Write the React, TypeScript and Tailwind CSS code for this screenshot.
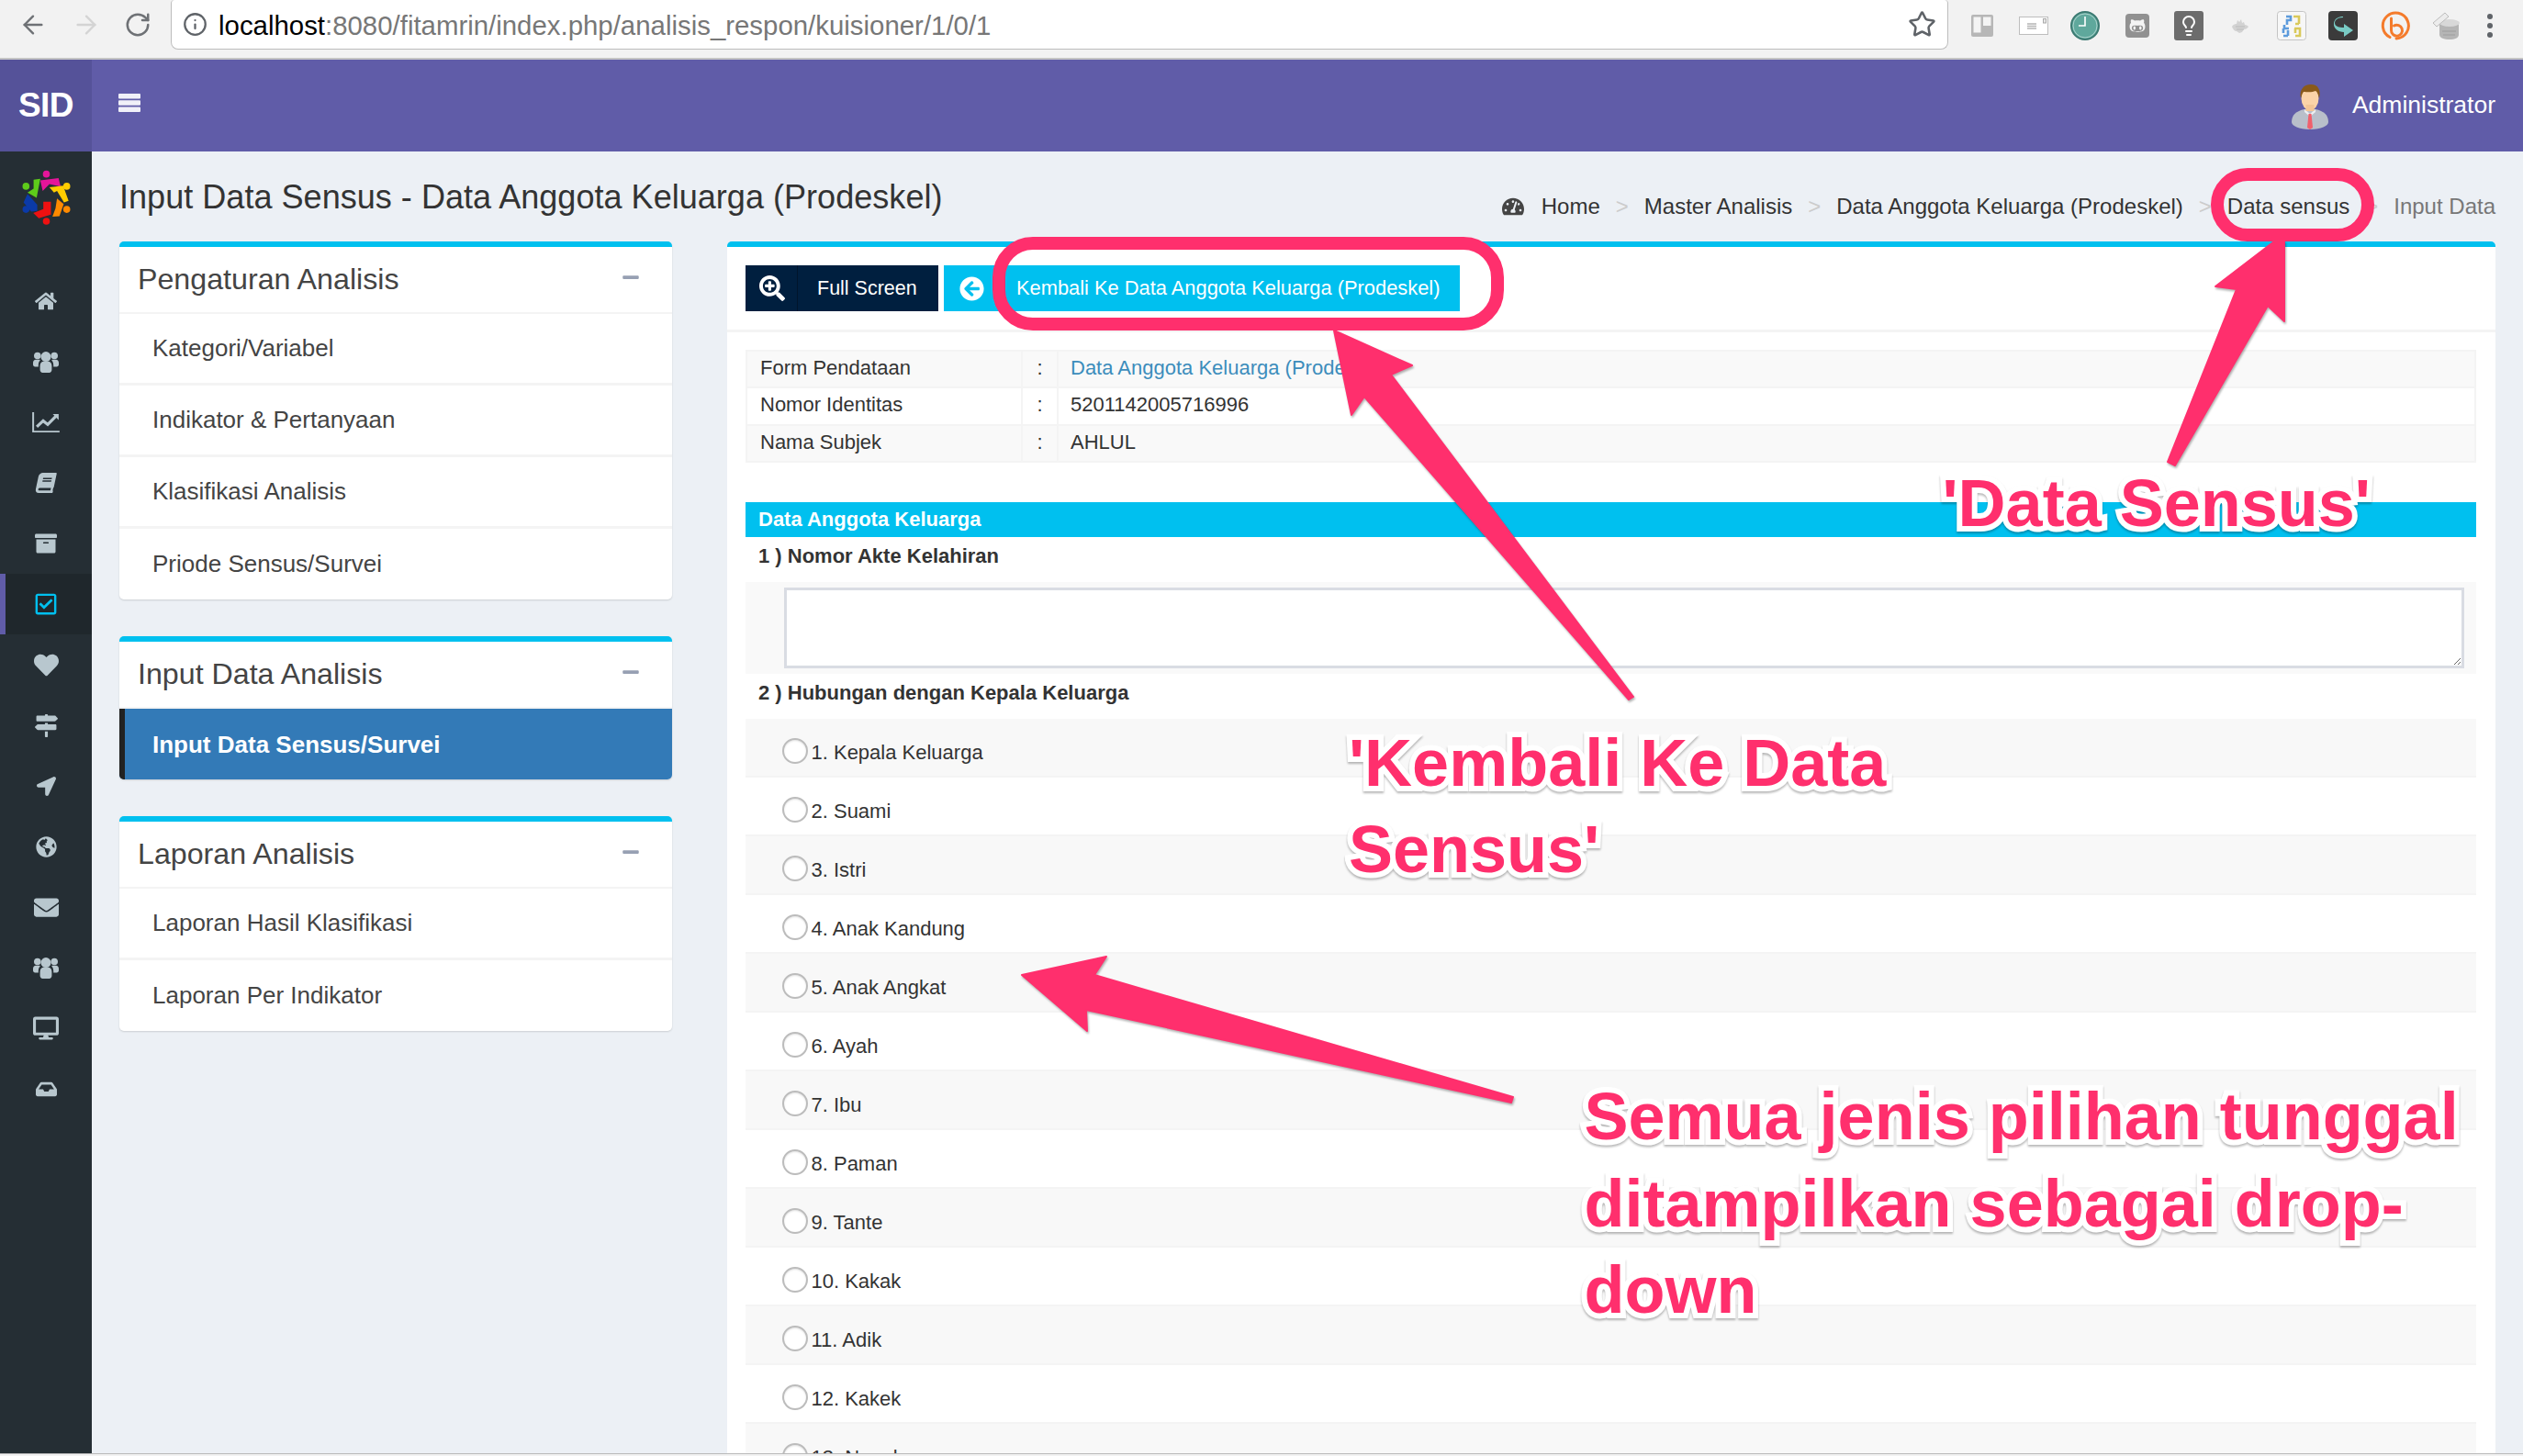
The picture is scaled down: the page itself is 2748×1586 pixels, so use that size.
import React from "react";
import { ArrowLeft, ArrowRight, RotateCw, Star, Info, Lightbulb } from "lucide-react";
import {
  FaHome, FaBook, FaArchive, FaRegCheckSquare, FaHeart, FaMapSigns,
  FaLocationArrow, FaGlobeAmericas, FaEnvelope, FaDesktop, FaInbox, FaTachometerAlt,
  FaMinus, FaSearchPlus, FaArrowCircleLeft, FaGithubAlt,
} from "react-icons/fa";

function UsersIcon({ size = 28 }: { size?: number; className?: string }) {
  return (
    <svg width={size} height={size * 0.86} viewBox="0 0 28 24" fill="currentColor">
      <circle cx="14" cy="6.5" r="5.5" />
      <circle cx="4.8" cy="5.5" r="3.8" />
      <circle cx="23.2" cy="5.5" r="3.8" />
      <path d="M7.6 16.5c0-3 1.8-4.8 4-4.8h4.8c2.2 0 4 1.8 4 4.8v4.2c0 2-1.5 3.3-3.3 3.3h-6.2c-1.8 0-3.3-1.3-3.3-3.3z" />
      <path d="M0 13c0-2 1.3-3.3 3-3.3h3.6c.5 0 .9.2 1.2.4-.5 1-2 2-2 5.4v2H2.2C1 17.500 0 16.500 0 15.300z" />
      <path d="M28 13c0-2-1.300-3.300-3-3.300h-3.600c-.5 0-.9.2-1.200.4.5 1 2 2 2 5.400v2h3.600c1.200 0 2.200-1 2.200-2.200z" />
    </svg>
  );
}

function LineChartIcon({ size = 30 }: { size?: number; className?: string }) {
  return (
    <svg width={size} height={size * 0.76} viewBox="0 0 30 23" fill="none" stroke="currentColor">
      <path d="M1 0v21.500h29" strokeWidth="2" />
      <path d="M5 16l7-6.500 5 4 9-9" strokeWidth="3.200" />
      <path d="M22.500 2H29v6.500z" fill="currentColor" stroke="none" />
    </svg>
  );
}

const navIcons: { I: any; s: number; c: string }[] = [
  { I: FaHome, s: 24, c: "" },
  { I: UsersIcon, s: 28, c: "" },
  { I: LineChartIcon, s: 30, c: "" },
  { I: FaBook, s: 22, c: "-skew-x-12" },
  { I: FaArchive, s: 24, c: "" },
  { I: FaRegCheckSquare, s: 26, c: "" },
  { I: FaHeart, s: 27, c: "" },
  { I: FaMapSigns, s: 25, c: "" },
  { I: FaLocationArrow, s: 21, c: "" },
  { I: FaGlobeAmericas, s: 23, c: "" },
  { I: FaEnvelope, s: 27, c: "" },
  { I: UsersIcon, s: 28, c: "" },
  { I: FaDesktop, s: 28, c: "" },
  { I: FaInbox, s: 23, c: "" },
];

const radios = [
  "1. Kepala Keluarga", "2. Suami", "3. Istri", "4. Anak Kandung", "5. Anak Angkat", "6. Ayah", "7. Ibu",
  "8. Paman", "9. Tante", "10. Kakak", "11. Adik", "12. Kakek", "13. Nenek",
];

function Logo() {
  return (
    <svg width="53" height="61" viewBox="70 44 160 182">
      <circle cx="150" cy="57" r="11.5" fill="#e5159a" />
      <polygon points="130,78 190,70 197,98 160,90 138,112" fill="#e5159a" />
      <circle cx="217" cy="97" r="11.5" fill="#ffcc00" />
      <polygon points="160,100 205,95 223,145 208,150 185,112 175,118" fill="#ffcc00" />
      <circle cx="217" cy="173" r="11.5" fill="#ff8a00" />
      <polygon points="185,137 207,155 193,195 170,197 180,170" fill="#ff8a00" />
      <circle cx="150" cy="212" r="11.5" fill="#ee1111" />
      <polygon points="140,148 165,148 165,190 125,202 107,185 140,172" fill="#ee1111" />
      <circle cx="83" cy="173" r="11.5" fill="#0b3aa8" />
      <polygon points="88,122 120,158 120,178 100,180 75,150" fill="#0b3aa8" />
      <circle cx="83" cy="97" r="11.5" fill="#5ecb1a" />
      <polygon points="108,75 130,72 118,135 88,118 108,105" fill="#5ecb1a" />
    </svg>
  );
}

function Avatar() {
  return (
    <svg width="42" height="49" viewBox="0 0 42 49">
      <path d="M1 41c0-8 5-12 14-14h12c9 2 14 6 14 14 0 4-8 8-20 8S1 45 1 41z" fill="#b9bfca" />
      <path d="M15 27l6 5 6-5v3l-6 5-6-5z" fill="#eceff3" />
      <path d="M19.5 32h3l1.5 15-3 2-3-2z" fill="#f0606c" />
      <ellipse cx="21" cy="15" rx="9.5" ry="13" fill="#fbd3a8" />
      <rect x="16.5" y="22" width="9" height="7" fill="#f3c596" />
      <path d="M11 15C9 6 14 0 22 0s11 6 9 15c-1-4-2-7-4-8-4 2-10 1-13 1-2 2-2 5-3 7z" fill="#8a5a1a" />
    </svg>
  );
}

function Ext({ children }: { children: React.ReactNode }) {
  return <div className="w-[56.2px] h-[56px] flex items-center justify-center shrink-0">{children}</div>;
}

function Extensions() {
  return (
    <div className="flex items-center ml-[9px]">
      <Ext>
        <svg width="24" height="24" viewBox="0 0 24 24">
          <rect width="24" height="24" rx="2" fill="#b7b7b7" />
          <rect x="2.5" y="2.5" width="8" height="17" fill="#f4f4f4" />
          <rect x="13" y="2.5" width="8.5" height="9.5" fill="#f4f4f4" />
        </svg>
      </Ext>
      <Ext>
        <svg width="32" height="20" viewBox="0 0 32 20">
          <rect x="0.5" y="0.5" width="31" height="19" fill="#fff" stroke="#bdbdbd" />
          <rect x="26.5" y="2.5" width="3" height="4.5" fill="#e6e6e6" stroke="#aaa" />
          <path d="M9 8h10M9 10.5h10M9 13h10" stroke="#b5b5b5" strokeWidth="1.3" />
        </svg>
      </Ext>
      <Ext>
        <svg width="32" height="32" viewBox="0 0 32 32">
          <circle cx="16" cy="16" r="15" fill="#5fa89c" stroke="#3c7a72" strokeWidth="2" />
          <circle cx="16" cy="16" r="13" fill="none" stroke="#cfe6e2" strokeWidth="0.7" />
          <path d="M16 6v10H9" fill="none" stroke="#fff" strokeWidth="1.6" />
        </svg>
      </Ext>
      <Ext>
        <div className="w-[26px] h-[26px] rounded-[4px] bg-[#919191] flex items-center justify-center text-[#f4f4f4]">
          <FaGithubAlt size={18} />
        </div>
      </Ext>
      <Ext>
        <div className="w-[32px] h-[32px] rounded-[3px] bg-[#6c6c6c] flex items-center justify-center text-white">
          <Lightbulb size={24} strokeWidth={2} />
        </div>
      </Ext>
      <Ext>
        <svg width="20" height="17" viewBox="0 0 20 17">
          <path d="M1 9c2-3 4-3 5-3l1-4 2 2 2-3 1 4 2-1 1 3c2 0 3 1 4 2-1 2-3 3-5 3l-2 3-3 1-3-2c-2 0-4-2-5-5z" fill="#d2d2d2" />
          <path d="M5 9h10M6 12h8" stroke="#bbb" strokeWidth="1" />
        </svg>
      </Ext>
      <Ext>
        <svg width="32" height="32" viewBox="0 0 32 32">
          <rect x="0.5" y="0.5" width="31" height="31" rx="3" fill="#f7f7f7" stroke="#c4c4c4" />
          <path d="M10 6h5v4h-4v5M8 15v4h5M7 24v-5M12 21v6M7 27h5" fill="none" stroke="#5d9bdc" strokeWidth="2.6" />
          <path d="M18 6h6v8M24 14h-4M19 19h6v8h-5M20 19v5" fill="none" stroke="#d9c95a" strokeWidth="2.6" />
        </svg>
      </Ext>
      <Ext>
        <svg width="32" height="32" viewBox="0 0 32 32">
          <rect width="32" height="32" rx="4" fill="#3b3b3b" />
          <path d="M15 7c-6 0-9 3-9 6 0 4 5 5 10 5v-4l10 7-10 7v-5C10 23 4 19 5 13 6 8 10 6 15 6z" fill="#79cbc4" transform="translate(1 0)" />
        </svg>
      </Ext>
      <Ext>
        <svg width="32" height="32" viewBox="0 0 32 32">
          <path d="M10 28.5A14 14 0 1 1 17 30" fill="none" stroke="#f47b2c" strokeWidth="3" strokeLinecap="round" />
          <path d="M11.5 8v13a6 6 0 1 0 3-5" fill="none" stroke="#f47b2c" strokeWidth="3" strokeLinecap="round" />
        </svg>
      </Ext>
      <Ext>
        <svg width="32" height="30" viewBox="0 0 32 30">
          <path d="M8 13h21v12c0 3-4 5-10 5s-11-2-11-5z" fill="#b5b5b5" />
          <ellipse cx="19" cy="12" rx="11" ry="4" fill="#d8d8d8" />
          <path d="M1 12L14 1l4 4L5 16z" fill="#ececec" stroke="#bcbcbc" />
          <path d="M11 21h15M12 25h13" stroke="#9d9d9d" strokeWidth="1.2" />
        </svg>
      </Ext>
      <div className="flex flex-col gap-[4px] ml-[16px]">
        <span className="w-[6px] h-[6px] rounded-full bg-[#5f6368]" />
        <span className="w-[6px] h-[6px] rounded-full bg-[#5f6368]" />
        <span className="w-[6px] h-[6px] rounded-full bg-[#5f6368]" />
      </div>
    </div>
  );
}

function PanelHead({ title }: { title: string }) {
  return (
    <div className="h-[73px] flex items-center justify-between pl-[20px] pr-[35px] border-b-[2px] border-[#f4f4f4]">
      <span className="text-[32.2px] text-[#444] leading-none mb-[1px]">{title}</span>
      <FaMinus size={20} className="text-[#97a0b3] mb-[5px]" />
    </div>
  );
}

function Item({ label, last }: { label: string; last?: boolean }) {
  return (
    <div className={`flex items-center pl-[36px] text-[26px] text-[#444] ${last ? "h-[77px]" : "h-[78px] border-b-[3px] border-[#f4f4f4]"}`}>
      {label}
    </div>
  );
}

function Panel({ title, children }: { title: string; children: React.ReactNode }) {
  return (
    <div className="bg-white border-t-[6px] border-[#00c0ef] rounded-[5px] shadow-[0_1px_2px_rgba(0,0,0,0.14)] overflow-hidden">
      <PanelHead title={title} />
      {children}
    </div>
  );
}

function Ann({ className, children }: { className: string; children: React.ReactNode }) {
  return (
    <div
      className={`absolute text-[72px] font-bold text-[#ff2f6d] whitespace-pre-line [-webkit-text-stroke:12px_white] [paint-order:stroke_fill] drop-shadow-[0_2px_1px_rgba(0,0,0,0.28)] ${className}`}
    >
      {children}
    </div>
  );
}

export default function App() {
  return (
    <div className="relative w-[2748px] h-[1586px] overflow-hidden flex flex-col bg-[#f2f2f2] [font-family:'Liberation_Sans',Arial,sans-serif]">
      {/* Browser bar */}
      <div className="h-[65px] shrink-0 flex items-start bg-[#f2f2f2] border-b-[2px] border-[#c4c4c4]">
        <div className="w-[186px] h-[54px] shrink-0 flex items-center pl-[20px] gap-[26px]">
          <ArrowLeft size={32} strokeWidth={1.8} className="text-[#6e7175]" />
          <ArrowRight size={32} strokeWidth={1.8} className="text-[#d4d4d4]" />
          <RotateCw size={30} strokeWidth={2} className="text-[#6e7175] -ml-[1px]" />
        </div>
        <div className="w-[1936px] h-[54px] shrink-0 bg-white border border-t-0 border-[#bdbdbd] rounded-b-[8px] rounded-t-[4px] flex items-center pl-[12px] pr-[12px]">
          <Info size={27} strokeWidth={2} className="text-[#5f6368] shrink-0" />
          <span className="ml-[12px] pt-[2px] text-[29.4px] leading-none text-[#777]">
            <span className="text-black">localhost</span>:8080/fitamrin/index.php/analisis_respon/kuisioner/1/0/1
          </span>
          <Star size={31} strokeWidth={2} className="ml-auto text-[#5f6368]" />
        </div>
        <Extensions />
      </div>

      {/* App header */}
      <div className="h-[100px] shrink-0 flex items-center bg-[#605ca8]">
        <div className="w-[100px] h-full bg-[#555299] flex items-center justify-center text-white font-bold text-[37px] tracking-[-0.5px]">
          SID
        </div>
        <svg width="24" height="20" viewBox="0 0 24 20" fill="#f0f0f8" className="ml-[29px] mb-[7px]">
          <rect width="24" height="5.5" rx="1" />
          <rect y="7.3" width="24" height="5.5" rx="1" />
          <rect y="14.5" width="24" height="5.5" rx="1" />
        </svg>
        <div className="ml-auto flex items-center mr-[30px]">
          <div className="mt-[3px]"><Avatar /></div>
          <span className="ml-[25px] text-[26.5px] text-white">Administrator</span>
        </div>
      </div>

      {/* Body */}
      <div className="flex-1 min-h-0 flex overflow-hidden">
        {/* Sidebar */}
        <div className="w-[100px] shrink-0 bg-[#252e34] flex flex-col">
          <div className="h-[130px] pt-[20px] flex justify-center shrink-0">
            <div className="h-[61px]"><Logo /></div>
          </div>
          {navIcons.map(({ I, s, c }, i) => (
            <div
              key={i}
              className={`h-[66px] shrink-0 flex items-center justify-center ${
                i === 5 ? "bg-[#1f272c] border-l-[6px] border-[#605ca8] pr-[6px] text-[#00c0ef]" : "text-[#b8c7ce]"
              }`}
            >
              <I size={s} className={c} />
            </div>
          ))}
        </div>

        {/* Content */}
        <div className="flex-1 min-w-0 bg-[#ecf0f5] px-[30px] flex flex-col">
          <div className="h-[98px] shrink-0 flex justify-between items-start">
            <h1 className="pt-[29px] text-[36.1px] leading-[42px] text-[#333]">
              Input Data Sensus - Data Anggota Keluarga (Prodeskel)
            </h1>
            <div className="pt-[45px] flex items-center text-[24px] leading-[30px] text-[#333] gap-[17px]">
              <FaTachometerAlt size={24} className="text-[#444]" />
              <span className="ml-[2px]">Home</span>
              <span className="text-[#ccc]">&gt;</span>
              <span>Master Analisis</span>
              <span className="text-[#ccc]">&gt;</span>
              <span>Data Anggota Keluarga (Prodeskel)</span>
              <span className="text-[#ccc]">&gt;</span>
              <span>Data sensus</span>
              <span className="text-[#ccc]">&gt;</span>
              <span className="text-[#777]">Input Data</span>
            </div>
          </div>

          <div className="flex-1 min-h-0 flex gap-[60px]">
            {/* Left */}
            <div className="w-[602px] shrink-0 flex flex-col gap-[40px]">
              <Panel title="Pengaturan Analisis">
                <Item label="Kategori/Variabel" />
                <Item label="Indikator & Pertanyaan" />
                <Item label="Klasifikasi Analisis" />
                <Item label="Priode Sensus/Survei" last />
              </Panel>
              <Panel title="Input Data Analisis">
                <div className="h-[77px] flex items-center pl-[30px] pt-[2px] border-l-[6px] border-[#222] bg-[#337ab7] text-white font-bold text-[26px]">
                  Input Data Sensus/Survei
                </div>
              </Panel>
              <Panel title="Laporan Analisis">
                <Item label="Laporan Hasil Klasifikasi" />
                <Item label="Laporan Per Indikator" last />
              </Panel>
            </div>

            {/* Right */}
            <div className="flex-1 min-w-0 bg-white border-t-[6px] border-[#00c0ef] rounded-t-[5px] overflow-hidden">
              <div className="h-[93px] pt-[20px] px-[20px] flex items-start gap-[6px] border-b-[3px] border-[#f4f4f4]">
                <div className="w-[210px] h-[50px] flex items-center bg-[#001f3f] text-white text-[21.5px]">
                  <div className="w-[57px] h-full pl-[2px] flex items-center justify-center border-r border-[#00152c]">
                    <FaSearchPlus size={28} />
                  </div>
                  <span className="ml-[21px]">Full Screen</span>
                </div>
                <div className="w-[562px] h-[50px] flex items-center bg-[#00c0ef] text-white text-[21.85px]">
                  <div className="w-[61px] h-full flex items-center justify-center">
                    <FaArrowCircleLeft size={27} />
                  </div>
                  <span className="ml-[18px] whitespace-nowrap">Kembali Ke Data Anggota Keluarga (Prodeskel)</span>
                </div>
              </div>

              <div className="px-[20px] pr-[21px] text-[22px] text-[#333]">
                <table className="w-full mt-[19px] border-collapse">
                  <tbody>
                    {[
                      ["Form Pendataan", "Data Anggota Keluarga (Prodeskel)", true],
                      ["Nomor Identitas", "5201142005716996", false],
                      ["Nama Subjek", "AHLUL", false],
                    ].map(([a, b, link], i) => (
                      <tr key={i} className={`h-[40.3px] ${i % 2 === 0 ? "bg-[#f9f9f9]" : "bg-white"}`}>
                        <td className="w-[300px] pl-[14px] pb-[3px] border-2 border-[#f4f4f4]">{a}</td>
                        <td className="w-[39px] text-center pb-[3px] border-2 border-[#f4f4f4]">:</td>
                        <td className={`pl-[13px] pb-[3px] border-2 border-[#f4f4f4] ${link ? "text-[#3c8dbc]" : ""}`}>{b}</td>
                      </tr>
                    ))}
                  </tbody>
                </table>

                <div className="mt-[43px] h-[38px] flex items-center pl-[14px] bg-[#00c0ef] text-white font-bold">
                  Data Anggota Keluarga
                </div>
                <div className="h-[49px] flex items-center pl-[14px] pb-[7px] font-bold">1 ) Nomor Akte Kelahiran</div>
                <div className="h-[100px] bg-[#f9f9f9] pl-[42px] pr-[13px] pt-[6px]">
                  <textarea readOnly className="block w-full h-[88px] bg-white border-[3px] border-[#d9dce3] outline-none" />
                </div>
                <div className="h-[49px] flex items-center pl-[14px] pb-[7px] font-bold">2 ) Hubungan dengan Kepala Keluarga</div>
                {radios.map((r, i) => (
                  <label
                    key={r}
                    className={`h-[64px] flex items-start pl-[40px] pt-[21px] border-b-[2px] border-[#f4f4f4] ${
                      i % 2 === 0 ? "bg-[#f8f8f8]" : "bg-white"
                    }`}
                  >
                    <input
                      type="radio"
                      name="hubungan"
                      className="appearance-none w-[28px] h-[28px] rounded-full border-2 border-[#bcbcbc] bg-white shadow-[inset_0_1px_2px_rgba(0,0,0,0.12)] shrink-0"
                    />
                    <span className="ml-[3.5px] mt-[1px] leading-[30px]">{r}</span>
                  </label>
                ))}
              </div>
            </div>
          </div>
        </div>
      </div>

      {/* Bottom window edge */}
      <div className="h-[3px] shrink-0 bg-[#f2f2f2] border-t-[1px] border-[#b9b9b9]" />

      {/* Annotations */}
      <svg
        className="absolute left-0 top-0 w-[2748px] h-[1586px] pointer-events-none drop-shadow-[1px_2px_1px_rgba(0,0,0,0.3)]"
        viewBox="0 0 2748 1586"
      >
        <g fill="#ff2f6d" stroke="#ff2f6d" strokeWidth="2" strokeLinejoin="round">
          <polygon points="2477,263 2488,263 2488,350 2470,333 2369,507 2361,503 2436,315 2413,312" />
          <polygon points="1453,360 1538,398 1515,408 1779,759 1774,762 1486,432 1472,452" />
          <polygon points="1113,1062 1205,1042 1192,1062 1648,1195 1646,1201 1183,1100 1184,1123" />
        </g>
      </svg>
      <div className="absolute left-[1081px] top-[258px] w-[557px] h-[102px] border-[14px] border-[#ff2f6d] rounded-[44px]" />
      <div className="absolute left-[2408px] top-[183px] w-[178px] h-[80px] border-[14px] border-[#ff2f6d] rounded-[40px]" />
      <Ann className="left-[2115.5px] top-[501px] leading-[94px]">'Data Sensus'</Ann>
      <Ann className="left-[1469px] top-[783.5px] leading-[94px]">{"'Kembali Ke Data\nSensus'"}</Ann>
      <Ann className="left-[1725.5px] top-[1169px] leading-[94.5px]">{"Semua jenis pilihan tunggal\nditampilkan sebagai drop-\ndown"}</Ann>
    </div>
  );
}
